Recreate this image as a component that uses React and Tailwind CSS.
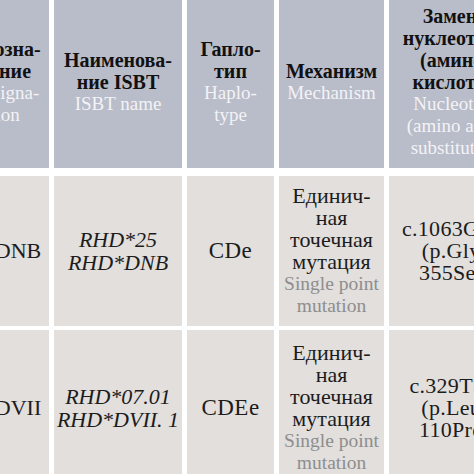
import React from 'react';

const cols = 'grid grid-cols-[88px_128px_87px_105px_132px] gap-x-[5px] -ml-[39px]';

function Lines({ items, className }) {
  return (
    <div className={className}>
      {items.map((t, i) => (
        <div key={i} className="whitespace-nowrap">{t}</div>
      ))}
    </div>
  );
}

function HeadCell({ ru, en }) {
  return (
    <div className="bg-[#b9bcc9] flex flex-col items-center justify-center text-center leading-[22px]">
      <Lines items={ru} className="font-bold text-[20px] text-[#111]" />
      <Lines items={en} className="text-[19px] text-[#f3f3f6]" />
    </div>
  );
}

function Cell({ children, className = '' }) {
  return (
    <div className={`bg-[#e2dfdd] flex flex-col items-center justify-center text-center leading-[22px] text-[22px] text-[#1c1c1c] ${className}`}>
      {children}
    </div>
  );
}

function BodyRow({ code, isbt, haplo, subst, height }) {
  return (
    <div className={`${cols} ${height}`}>
      <Cell className="pl-[26px]">{code}</Cell>
      <Cell>
        <Lines items={isbt} className="italic leading-[23px]" />
      </Cell>
      <Cell>
        <div className="text-[23px] tracking-[0.5px]">{haplo}</div>
      </Cell>
      <Cell>
        <Lines items={['Единич-', 'ная', 'точечная', 'мутация']} />
        <Lines items={['Single point', 'mutation']} className="text-[#8e8e8e] text-[19.5px]" />
      </Cell>
      <Cell>
        <Lines items={subst} className="tracking-[0.3px]" />
      </Cell>
    </div>
  );
}

export default function App() {
  return (
    <div className="w-[474px] h-[474px] overflow-hidden bg-white font-['Liberation_Serif',serif]">
      <div className="-mt-[5px] flex flex-col">
        <div className={`${cols} h-[173px]`}>
          <HeadCell ru={['Обозна-', 'чение']} en={['Designa-', 'tion']} />
          <HeadCell ru={['Наименова-', 'ние ISBT']} en={['ISBT name']} />
          <HeadCell ru={['Гапло-', 'тип']} en={['Haplo-', 'type']} />
          <HeadCell ru={['Механизм']} en={['Mechanism']} />
          <HeadCell
            ru={['Замена', 'нуклеотида', '(амино-', 'кислоты)']}
            en={['Nucleotide', '(amino acid)', 'substitution']}
          />
        </div>
        <div className="h-[8px]" />
        <BodyRow
          code="DNB"
          isbt={['RHD*25', 'RHD*DNB']}
          haplo="CDe"
          subst={['c.1063G>A', '(p.Gly-', '355Ser)']}
          height="h-[150px]"
        />
        <div className="h-[4px]" />
        <BodyRow
          code="DVII"
          isbt={['RHD*07.01', 'RHD*DVII. 1']}
          haplo="CDEe"
          subst={['c.329T>C', '(p.Leu-', '110Pro)']}
          height="h-[156px]"
        />
      </div>
    </div>
  );
}
